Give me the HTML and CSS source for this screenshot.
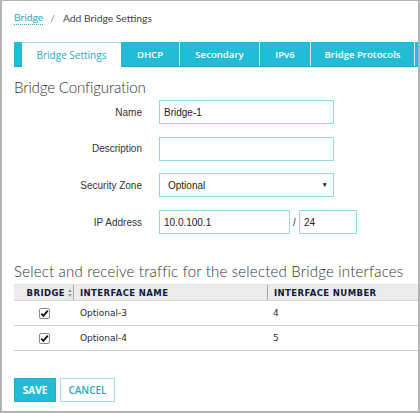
FILE: index.html
```html
<!DOCTYPE html>
<html>
<head>
<meta charset="utf-8">
<link rel="stylesheet" href="styles.css">
</head>
<body>
<div class="frame">
  <div class="crumbs"><a class="crumb-link">Bridge</a><span class="crumb-sep">/</span><span class="crumb-cur">Add Bridge Settings</span></div>

  <div class="tabs">
    <div class="tab-lead"></div>
    <div class="tab active w-settings">Bridge Settings</div>
    <div class="tab w-dhcp">DHCP</div>
    <div class="tab w-secondary">Secondary</div>
    <div class="tab w-ipv6">IPv6</div>
    <div class="tab w-protocols">Bridge Protocols</div>
    <div class="tab w-rest"></div>
  </div>

  <h1 class="section-title">Bridge Configuration</h1>

  <div class="form">
    <div class="row">
      <label class="label">Name</label>
      <div class="field"><input class="input w-name" type="text" value="Bridge-1"></div>
    </div>
    <div class="row">
      <label class="label">Description</label>
      <div class="field"><input class="input w-name" type="text" value=""></div>
    </div>
    <div class="row">
      <label class="label">Security Zone</label>
      <div class="field">
        <div class="select w-name">
          <span class="select-text">Optional</span>
          <span class="select-arrow">▼</span>
        </div>
      </div>
    </div>
    <div class="row">
      <label class="label">IP Address</label>
      <div class="field">
        <input class="input w-ip" type="text" value="10.0.100.1">
        <span class="slash">/</span>
        <input class="input w-mask" type="text" value="24">
      </div>
    </div>
  </div>

  <h2 class="table-title">Select and receive traffic for the selected Bridge interfaces</h2>

  <div class="table">
    <div class="thead">
      <div class="th c1">BRIDGE<span class="sort"><svg width="4" height="8" viewBox="0 0 4 8"><path d="M2 0 L4 3 L0 3 Z M2 8 L4 5 L0 5 Z" fill="#9a9a9a"/></svg></span></div>
      <div class="th c2">INTERFACE NAME</div>
      <div class="th c3">INTERFACE NUMBER</div>
    </div>
    <div class="tr">
      <div class="td c1"><svg class="check" width="11" height="11" viewBox="0 0 11 11"><rect x="0.5" y="0.5" width="10" height="10" rx="1.5" fill="#fff" stroke="#8a8a8a"/><path d="M2.3 5.6 L4.4 7.9 L8.8 2.6" fill="none" stroke="#111" stroke-width="1.8"/></svg></div>
      <div class="td c2">Optional-3</div>
      <div class="td c3">4</div>
    </div>
    <div class="tr">
      <div class="td c1"><svg class="check" width="11" height="11" viewBox="0 0 11 11"><rect x="0.5" y="0.5" width="10" height="10" rx="1.5" fill="#fff" stroke="#8a8a8a"/><path d="M2.3 5.6 L4.4 7.9 L8.8 2.6" fill="none" stroke="#111" stroke-width="1.8"/></svg></div>
      <div class="td c2">Optional-4</div>
      <div class="td c3">5</div>
    </div>
  </div>

  <div class="actions">
    <button class="btn btn-primary">SAVE</button>
    <button class="btn btn-secondary">CANCEL</button>
  </div>
</div>
</body>
</html>
```

FILE: styles.css
```css
* { box-sizing: border-box; }
html, body { margin: 0; padding: 0; background: #fff; }
.frame {
  width: 420px;
  height: 413px;
  border: 2px solid #b3b3b3;
  border-top-width: 1px;
  padding: 10px 0 0 12px;
  overflow: hidden;
  font-family: "Liberation Sans", Arial, sans-serif;
  color: #333;
}
.crumbs {
  font-family: Lato, "Open Sans", sans-serif;
  font-size: 10.3px;
  line-height: 14px;
  color: #444;
  display: flex;
  align-items: center;
}
.crumb-link {
  color: #2aa9c4;
  border-bottom: 1px dotted #2aa9c4;
  line-height: 13px;
}
.crumb-sep { color: #888; margin: 0 8px 0 7px; }
.crumb-cur { color: #444; }

.tabs {
  margin-top: 17px;
  display: flex;
  height: 25px;
  width: 420px;
  background: #22bcd6;
  border-bottom: 1px solid #1aa9c2;
}
.tab-lead { width: 8px; flex: none; }
.tab {
  flex: none;
  height: 24px;
  display: flex;
  align-items: center;
  justify-content: center;
  font-family: "Open Sans", Lato, sans-serif;
  font-weight: 600;
  font-size: 9.6px;
  color: #fff;
  border-right: 1px solid #d9f3f7;
}
.tab.active {
  background: #fff;
  color: #2aa9c4;
  font-weight: 400;
  font-size: 10px;
  border-top: 1px solid #9fdde8;
  border-right: none;
  height: 25px;
}
.w-settings { width: 99px; }
.w-dhcp { width: 59px; }
.w-secondary { width: 80px; }
.w-ipv6 { width: 51px; }
.w-protocols { width: 104px; }
.w-rest { width: 20px; border-right: none; }

.section-title {
  margin: 10px 0 0 0;
  font-family: Lato, "Open Sans", sans-serif;
  font-weight: 300;
  font-size: 15.2px;
  letter-spacing: -0.2px;
  line-height: 20px;
  color: #333;
}

.form {
  margin-top: 3px;
  display: flex;
  flex-direction: column;
  gap: 12.7px;
}
.row {
  display: flex;
  align-items: center;
  height: 24px;
}
.label {
  width: 128px;
  text-align: right;
  font-size: 10px;
  color: #333;
  margin-right: 17px;
}
.field { display: flex; align-items: center; }
.input {
  height: 24px;
  border: 1px solid #8ddbe8;
  padding: 0 4px;
  font-family: "Liberation Sans", Arial, sans-serif;
  font-size: 10px;
  color: #222;
  outline: none;
  margin: 0;
}
.w-name { width: 175px; }
.w-ip { width: 131px; }
.w-mask { width: 58px; }
.slash { width: 9px; text-align: center; font-size: 10px; color: #333; }
.select {
  position: relative;
  height: 24px;
  border: 1px solid #8ddbe8;
  display: flex;
  align-items: center;
  padding-left: 8px;
  font-size: 10px;
  color: #222;
}
.select-arrow {
  position: absolute;
  right: 5px;
  top: 7px;
  font-size: 6.5px;
  color: #111;
}

.table-title {
  margin: 28px 0 0 0;
  font-family: Lato, "Open Sans", sans-serif;
  font-weight: 300;
  font-size: 15px;
  letter-spacing: 0.2px;
  line-height: 18px;
  color: #333;
}

.table {
  margin-top: 4px;
  width: 406px;
  font-family: "DejaVu Sans", Verdana, sans-serif;
}
.thead {
  display: flex;
  height: 17px;
  background: #ececec;
  border-top: 1px solid #e2e2e2;
  border-bottom: 1px solid #d4d4d4;
}
.th {
  display: flex;
  align-items: center;
  font-weight: bold;
  font-size: 8.5px;
  letter-spacing: 0.4px;
  color: #0e1a3a;
  padding-left: 6px;
}
.thead .c1 { justify-content: flex-end; padding-left: 0; padding-right: 0; }
.thead .c2, .thead .c3 { border-left: 1px solid #a9a9a9; }
.c1 { width: 59px; flex: none; }
.c2 { width: 194px; flex: none; }
.c3 { flex: 1; }
.sort { display: inline-flex; margin-left: 3px; margin-right: 1px; }
.tr {
  display: flex;
  height: 25px;
  border-bottom: 1px solid #cfcfcf;
}
.td {
  display: flex;
  align-items: center;
  font-size: 9px;
  color: #2b2b3b;
  padding-left: 7px;
}
.tr .c1 { justify-content: center; padding-left: 2px; }
.tr .c3 { padding-left: 6px; }
.check { display: block; }

.actions {
  margin-top: 27px;
  display: flex;
  gap: 4px;
}
.btn {
  height: 24px;
  margin: 0;
  font-family: "Open Sans", Lato, sans-serif;
  font-size: 10px;
  font-weight: 700;
  cursor: pointer;
}
.btn-primary {
  width: 42px;
  background: #22bcd6;
  border: 1px solid #1fb1ca;
  color: #fff;
  padding: 0;
}
.btn-secondary {
  width: 55px;
  background: #fff;
  border: 1px solid #9fe0eb;
  color: #2aa9c4;
  font-weight: 600;
  padding: 0;
}
```
